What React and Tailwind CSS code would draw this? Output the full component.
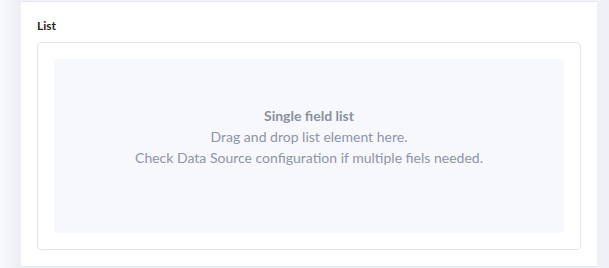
export default function App() {
  return (
    <div className="flex h-[268px] w-[609px] bg-[#f0f1f6]" style={{ fontFamily: "Lato, 'Noto Sans', sans-serif" }}>
      <div className="w-[21px] bg-gradient-to-r from-[#f8f9fc] to-[#eceef4]" />
      <div className="mt-px h-[266px] w-[576px] border-y border-[#e6e6ee] bg-white px-4 pt-[15px]">
        <div className="h-[25px] text-[12px] font-bold leading-[17px] text-[#2a1f26]">List</div>
        <div className="h-[208px] rounded-[4px] border border-[#e3e3ed] p-4">
          <div className="flex h-[174px] flex-col items-center justify-center rounded-[4px] bg-[#f7f8fb] pb-[20px] text-center text-[14px] leading-[21px] text-[#8e94aa]">
            <div className="font-bold text-[#8a90a4]">Single field list</div>
            <div>Drag and drop list element here.</div>
            <div>Check Data Source configuration if multiple fiels needed.</div>
          </div>
        </div>
      </div>
      <div className="flex-1 bg-[#f0f1f6]" />
    </div>
  );
}
